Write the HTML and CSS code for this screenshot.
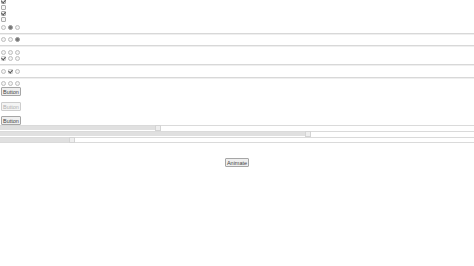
FILE: index.html
```html
<!DOCTYPE html>
<html>
<head>
<meta charset="utf-8">
<link rel="stylesheet" href="styles.css">
</head>
<body>
<div class="page">
  <div class="row first"><span class="cb on"></span></div>
  <div class="row"><span class="cb"></span></div>
  <div class="row"><span class="cb on"></span></div>
  <div class="row"><span class="cb"></span></div>
  <div class="row gap1"><span class="rd"></span><span class="rd on"></span><span class="rd"></span></div>
  <div class="sep s1"></div>
  <div class="row gap2"><span class="rd"></span><span class="rd"></span><span class="rd on"></span></div>
  <div class="sep s2"></div>
  <div class="row gap3"><span class="rd"></span><span class="rd"></span><span class="rd"></span></div>
  <div class="row"><span class="cb on bare"></span><span class="rd"></span><span class="rd"></span></div>
  <div class="sep s3"></div>
  <div class="row gap4"><span class="rd"></span><span class="cb on bare"></span><span class="rd"></span></div>
  <div class="sep s4"></div>
  <div class="row gap5"><span class="rd"></span><span class="rd"></span><span class="rd"></span></div>
  <div class="btnrow b1"><button class="btn">Button</button></div>
  <div class="btnrow b2"><button class="btn" disabled>Button</button></div>
  <div class="btnrow b3"><button class="btn">Button</button></div>
  <div class="sliders">
    <div class="slider"><div class="fill" style="width:155px"></div><span class="thumb"></span></div>
    <div class="slider"><div class="fill" style="width:305px"></div><span class="thumb"></span></div>
    <div class="slider"><div class="fill" style="width:69px"></div><span class="thumb"></span></div>
  </div>
  <div class="animrow"><button class="btn">Animate</button></div>
</div>
</body>
</html>
```
FILE: styles.css
```css
html, body {
  margin: 0;
  padding: 0;
  background: #fff;
}
body {
  width: 474px;
  height: 266px;
  overflow: hidden;
  font-family: "Liberation Sans", Arial, sans-serif;
  font-size: 5.5px;
  color: #333;
}
.page {
  margin-top: -2px;
}
.row {
  height: 6px;
  display: flex;
  align-items: center;
  gap: 2px;
  padding-left: 1px;
}
.gap1 { margin-top: 2px; }
.gap2 { margin-top: 1px; }
.gap3 { margin-top: 2px; }
.gap4 { margin-top: 2px; }
.gap5 { margin-top: 1px; }
.sep {
  height: 1px;
  background: #d8d8d8;
  border-bottom: 1px solid #efefef;
}
.s1, .s2, .s3, .s4 { margin-top: 3px; }
.cb {
  box-sizing: border-box;
  width: 5px;
  height: 5px;
  border: 1px solid #ababab;
  border-radius: 1px;
  background: #f6f6f6;
  position: relative;
}
.cb.on::after {
  content: "";
  position: absolute;
  left: 0px;
  top: -1px;
  width: 2px;
  height: 3px;
  border-right: 1px solid #555;
  border-bottom: 1px solid #555;
  transform: rotate(40deg);
}
.cb.bare {
  border-color: #d0d0d0;
}
.rd {
  box-sizing: border-box;
  width: 5px;
  height: 5px;
  border: 1px solid #bdbdbd;
  border-radius: 50%;
  background: #f4f4f4;
}
.rd.on {
  background: #777;
  border-color: #999;
}
.btnrow {
  padding-left: 1px;
  display: flex;
}
.b1 { margin-top: 1px; }
.b2 { margin-top: 6px; }
.b3 { margin-top: 5px; }
.btn {
  box-sizing: border-box;
  height: 9px;
  margin: 0;
  padding: 0 1px;
  font-family: "Liberation Sans", Arial, sans-serif;
  font-size: 5.5px;
  line-height: 6px;
  color: #444;
  background: #efefef;
  border: 1px solid #a6a6a6;
  border-radius: 1px;
  display: flex;
  align-items: center;
}
.btn:disabled {
  color: #b0b0b0;
  border-color: #cdcdcd;
  background: #f4f4f4;
}
.slider {
  box-sizing: border-box;
  height: 6px;
  border-top: 1px solid #dadada;
  display: flex;
  align-items: flex-start;
}
.slider:last-child {
  border-bottom: 1px solid #dadada;
}
.fill {
  background: #e0e0e0;
  height: 4px;
}
.thumb {
  margin-top: -1px;
  width: 6px;
  height: 6px;
  box-sizing: border-box;
  background: #eeeeee;
  border: 1px solid #d4d4d4;
}
.animrow {
  display: flex;
  justify-content: center;
  margin-top: 15px;
}
```
